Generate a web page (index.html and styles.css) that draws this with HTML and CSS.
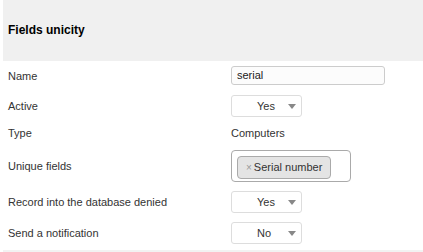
FILE: index.html
```html
<!DOCTYPE html>
<html>
<head>
<meta charset="utf-8">
<link rel="stylesheet" href="styles.css">
</head>
<body>
<div class="form">
  <div class="header"><span class="title">Fields unicity</span></div>
  <div class="row r-name">
    <div class="label">Name</div>
    <div class="value"><div class="input">serial</div></div>
  </div>
  <div class="row r-active">
    <div class="label">Active</div>
    <div class="value"><div class="select"><span>Yes</span><i class="arrow"></i></div></div>
  </div>
  <div class="row r-type">
    <div class="label">Type</div>
    <div class="value"><span class="text">Computers</span></div>
  </div>
  <div class="row r-unique">
    <div class="label">Unique fields</div>
    <div class="value"><div class="multi"><span class="tag"><span class="x">×</span>Serial number</span></div></div>
  </div>
  <div class="row r-record">
    <div class="label">Record into the database denied</div>
    <div class="value"><div class="select"><span>Yes</span><i class="arrow"></i></div></div>
  </div>
  <div class="row r-send">
    <div class="label">Send a notification</div>
    <div class="value"><div class="select"><span>No</span><i class="arrow"></i></div></div>
  </div>
  <div class="footer"></div>
</div>
</body>
</html>
```

FILE: styles.css
```css
html, body {
  margin: 0;
  padding: 0;
  background: #ffffff;
}
body {
  font-family: "Liberation Sans", Arial, sans-serif;
  color: #333333;
}
.form {
  margin-left: 3px;
}
.header {
  background: #f0f0f0;
  height: 61px;
  display: flex;
  align-items: center;
  padding-left: 5px;
  padding-bottom: 1px;
  box-sizing: border-box;
}
.title {
  font-weight: bold;
  font-size: 12px;
  color: #000000;
}
.row {
  display: grid;
  grid-template-columns: 228px 1fr;
  align-items: center;
}
.r-name { height: 29px; }
.r-active { height: 32px; }
.r-type { height: 21px; padding-top: 1px; box-sizing: border-box; }
.r-unique { height: 45px; }
.r-record { height: 28px; }
.r-send { height: 34px; }
.label {
  padding-left: 5px;
  font-size: 11px;
  color: #333333;
}
.value {
  font-size: 11px;
  color: #333333;
}
.input {
  width: 154px;
  height: 19px;
  box-sizing: border-box;
  border: 1px solid #cccccc;
  border-radius: 3px;
  background: #fcfcfc;
  padding-left: 5px;
  line-height: 17px;
  color: #222222;
}
.select {
  width: 71px;
  height: 22px;
  box-sizing: border-box;
  border: 1px solid #dddddd;
  border-radius: 3px;
  background: #ffffff;
  display: flex;
  align-items: center;
  padding-left: 25px;
  position: relative;
}
.arrow {
  position: absolute;
  left: 56px;
  top: 8px;
  width: 0;
  height: 0;
  border-left: 4px solid transparent;
  border-right: 4px solid transparent;
  border-top: 5px solid #888888;
}
.multi {
  width: 120px;
  height: 32px;
  box-sizing: border-box;
  border: 1px solid #aaaaaa;
  border-radius: 4px;
  padding: 5px 0 0 5px;
}
.tag {
  display: inline-flex;
  align-items: center;
  width: 94px;
  height: 23px;
  box-sizing: border-box;
  background: #e4e4e4;
  border: 1px solid #aaaaaa;
  border-radius: 4px;
  padding-left: 8px;
  color: #333333;
}
.x {
  color: #999999;
  font-size: 10px;
  margin-right: 2px;
}
.footer {
  height: 4px;
  background: #f2f2f2;
}
```
